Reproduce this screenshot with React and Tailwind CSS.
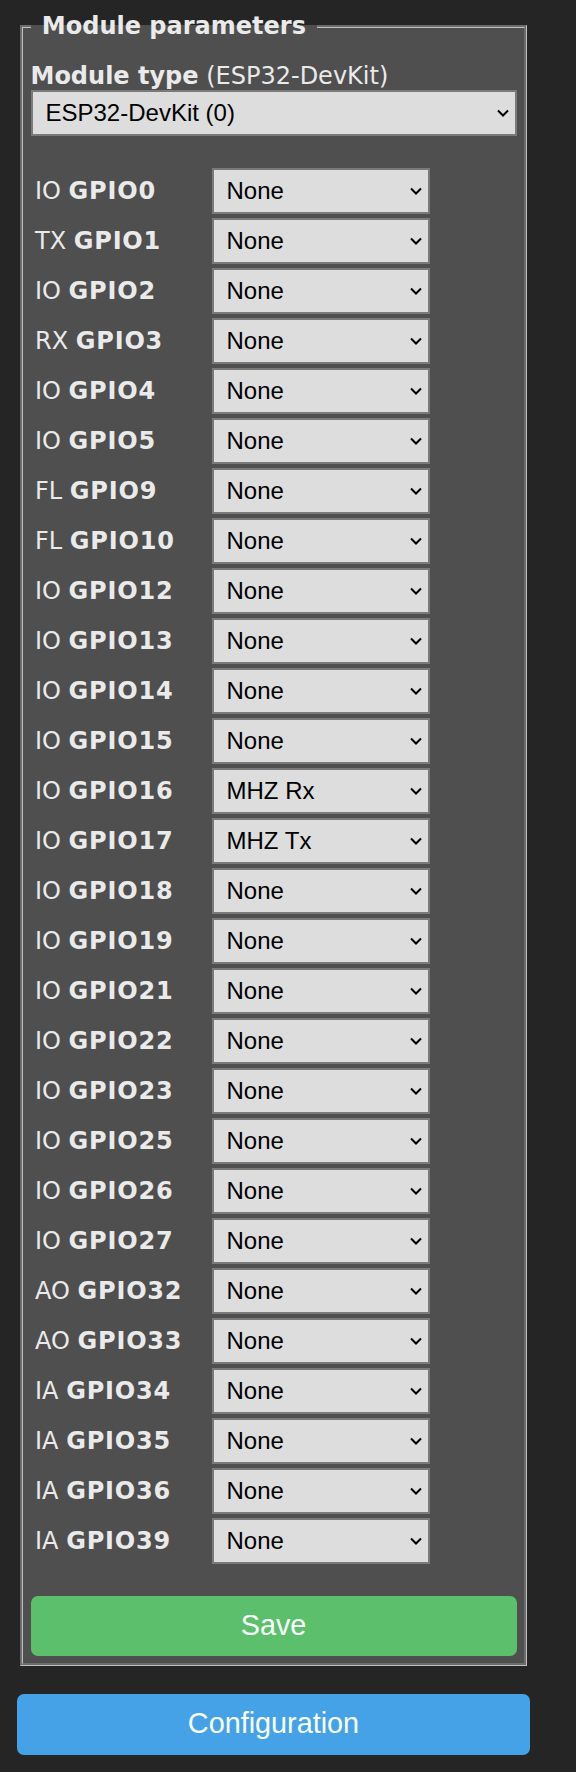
import React from 'react';

const pins = [
    ['IO', 'GPIO0', 'None'],
    ['TX', 'GPIO1', 'None'],
    ['IO', 'GPIO2', 'None'],
    ['RX', 'GPIO3', 'None'],
    ['IO', 'GPIO4', 'None'],
    ['IO', 'GPIO5', 'None'],
    ['FL', 'GPIO9', 'None'],
    ['FL', 'GPIO10', 'None'],
    ['IO', 'GPIO12', 'None'],
    ['IO', 'GPIO13', 'None'],
    ['IO', 'GPIO14', 'None'],
    ['IO', 'GPIO15', 'None'],
    ['IO', 'GPIO16', 'MHZ Rx'],
    ['IO', 'GPIO17', 'MHZ Tx'],
    ['IO', 'GPIO18', 'None'],
    ['IO', 'GPIO19', 'None'],
    ['IO', 'GPIO21', 'None'],
    ['IO', 'GPIO22', 'None'],
    ['IO', 'GPIO23', 'None'],
    ['IO', 'GPIO25', 'None'],
    ['IO', 'GPIO26', 'None'],
    ['IO', 'GPIO27', 'None'],
    ['AO', 'GPIO32', 'None'],
    ['AO', 'GPIO33', 'None'],
    ['IA', 'GPIO34', 'None'],
    ['IA', 'GPIO35', 'None'],
    ['IA', 'GPIO36', 'None'],
    ['IA', 'GPIO39', 'None'],
];

function Chevron() {
    return (
        <svg width="12" height="8" viewBox="0 0 12 8" className="pointer-events-none absolute right-[8px] top-1/2 -translate-y-1/2">
            <path d="M1 1.5 L6 6.5 L11 1.5" fill="none" stroke="#000" strokeWidth="2" />
        </svg>
    );
}

function Select({ value, className }) {
    return (
        <div className={`relative h-[46px] ${className}`}>
            <select
                defaultValue={value}
                className="h-full w-full appearance-none border-2 border-[#7a7a7a] bg-[#dddddd] pl-[13px] pr-8 text-[24px] text-black font-['Liberation_Sans',Arial,sans-serif] outline-none"
            >
                <option value={value}>{value}</option>
            </select>
            <Chevron />
        </div>
    );
}

export default function App() {
    return (
        <div className="min-h-screen w-full bg-[#252525] pt-[12px] font-['DejaVu_Sans',Verdana,sans-serif] text-[#eaeaea]">
            <div className="ml-[17px] w-[513px]">
                <fieldset className="mx-[3px] border-[3px] [border-style:groove] border-[#c0c0c0] bg-[#4f4f4f] px-[7.5px] pt-[7.5px] pb-[7.5px]">
                    <legend className="px-[3px] text-[24px] font-bold leading-[28px]">
                        {'\u00a0Module parameters\u00a0'}
                    </legend>

                    <div className="mt-[14px] text-[24px] leading-[28px] whitespace-nowrap">
                        <b>Module type</b> (ESP32-DevKit)
                    </div>
                    <Select value="ESP32-DevKit (0)" className="w-full" />

                    <div className="mt-[32px] flex flex-col gap-[4px] pl-[4.5px]">
                        {pins.map(([type, name, value]) => (
                            <div key={name} className="flex items-center">
                                <div className="w-[176.5px] text-[24px] leading-[28px] whitespace-nowrap">
                                    {type} <b className="tracking-[0.8px]">{name}</b>
                                </div>
                                <Select value={value} className="w-[218px]" />
                            </div>
                        ))}
                    </div>

                    <button className="mt-[32px] flex h-[60px] w-full items-center justify-center rounded-[7px] bg-[#5cbf6b] text-[28.8px] text-[#faffff] font-['Liberation_Sans',Arial,sans-serif]">
                        Save
                    </button>
                </fieldset>

                <button className="mt-[27.5px] flex h-[61px] w-full items-center justify-center rounded-[7px] bg-[#46a2e7] text-[28.8px] text-[#faffff] font-['Liberation_Sans',Arial,sans-serif]">
                    Configuration
                </button>
            </div>
        </div>
    );
}
